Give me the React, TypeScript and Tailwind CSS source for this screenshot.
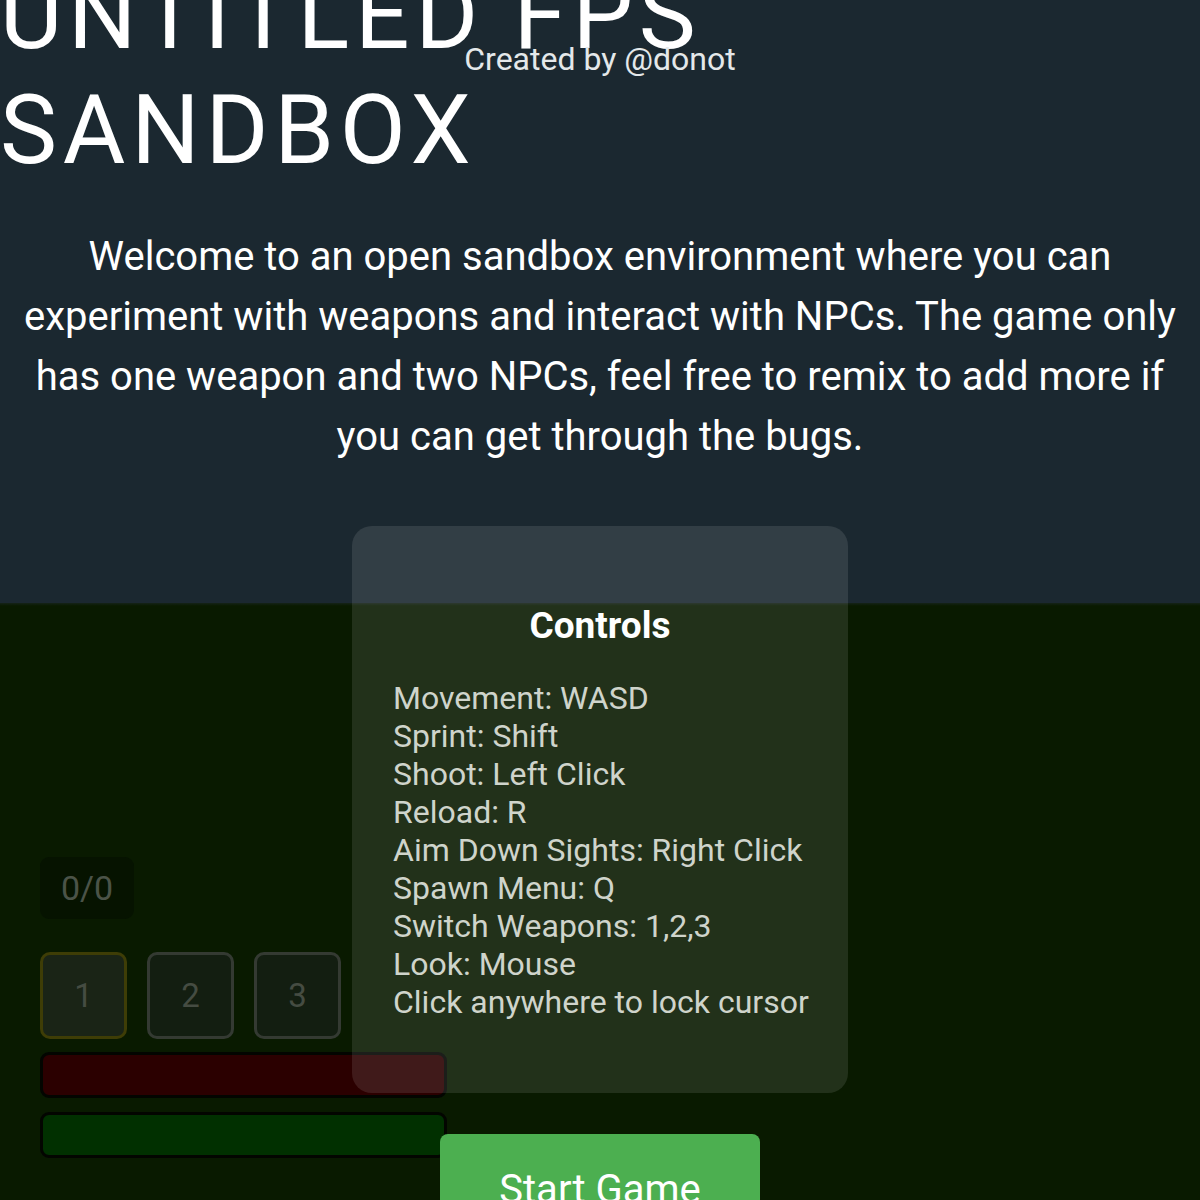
import React from "react";

const controls = [
  "Movement: WASD",
  "Sprint: Shift",
  "Shoot: Left Click",
  "Reload: R",
  "Aim Down Sights: Right Click",
  "Spawn Menu: Q",
  "Switch Weapons: 1,2,3",
  "Look: Mouse",
  "Click anywhere to lock cursor",
];

function Hud() {
  return (
    <div className="absolute left-[40px] bottom-[42px] flex flex-col">
      <div className="w-[94px] h-[62px] rounded-[9px] bg-[#061300] flex items-center justify-center text-[34px] text-[#4b5348] leading-none">
        0/0
      </div>
      <div className="mt-[33px] flex gap-[20px]">
        {[1, 2, 3].map((n) => (
          <div
            key={n}
            className={
              n === 1
                ? "w-[87px] h-[87px] rounded-[10px] border-[3px] border-[#3e3d06] bg-[#1a2416] flex items-center justify-center text-[33px] text-[#454c42]"
                : "w-[87px] h-[87px] rounded-[10px] border-[3px] border-[#343a32] bg-[#131e11] flex items-center justify-center text-[33px] text-[#454c42]"
            }
          >
            {n}
          </div>
        ))}
      </div>
      <div className="mt-[13px] w-[407px] h-[46px] rounded-[9px] border-[3px] border-[#030500] bg-[#2b0000]" />
      <div className="mt-[14px] w-[407px] h-[46px] rounded-[9px] border-[3px] border-[#030500] bg-[#013000]" />
    </div>
  );
}

export default function App() {
  return (
    <div
      className="relative w-[1200px] h-[1200px] overflow-hidden bg-[#091a00]"
      style={{ fontFamily: "Roboto, 'Noto Sans', sans-serif" }}
    >
      {/* scene: sky and ground behind the menu */}
      <div className="flex flex-col h-full">
        <div className="h-[603px] bg-[#1b2830]" />
        <div className="h-[3px] bg-gradient-to-b from-[#152218] to-[#091a00]" />
        <div className="flex-1 bg-[#091a00]" />
      </div>

      <Hud />

      {/* start menu */}
      <div className="absolute inset-0 flex flex-col items-center text-white">
        <div className="relative w-full shrink-0 mt-[-42px]">
          <h1 className="w-[750px] text-[96px] leading-[115px] font-normal tracking-[0.06em] text-left">
            UNTITLED FPS SANDBOX
          </h1>
          <p className="absolute left-0 right-0 top-[82px] text-center text-[32px] text-[#e4e8ea] leading-[38px]">
            Created by @donot
          </p>
        </div>

        <p className="shrink-0 mt-[39px] px-[20px] text-center text-[40px] leading-[60px]">
          Welcome to an open sandbox environment where you can experiment with
          weapons and interact with NPCs. The game only has one weapon and two
          NPCs, feel free to remix to add more if you can get through the bugs.
        </p>

        <div className="shrink-0 mt-[59px] w-[496px] h-[567px] rounded-[20px] bg-white/10 pt-[79px] px-[41px]">
          <h2 className="text-center text-[37px] font-bold leading-[42px]">
            Controls
          </h2>
          <ul className="mt-[32px] text-[32px] leading-[38px] text-[#cfd4cb] whitespace-nowrap">
            {controls.map((c) => (
              <li key={c}>{c}</li>
            ))}
          </ul>
        </div>

        <button className="shrink-0 mt-[41px] w-[320px] rounded-[8px] bg-[#4caf50] pt-[32px] pb-[32px] text-[40px] leading-[47px] text-white">
          Start Game
        </button>
      </div>
    </div>
  );
}
